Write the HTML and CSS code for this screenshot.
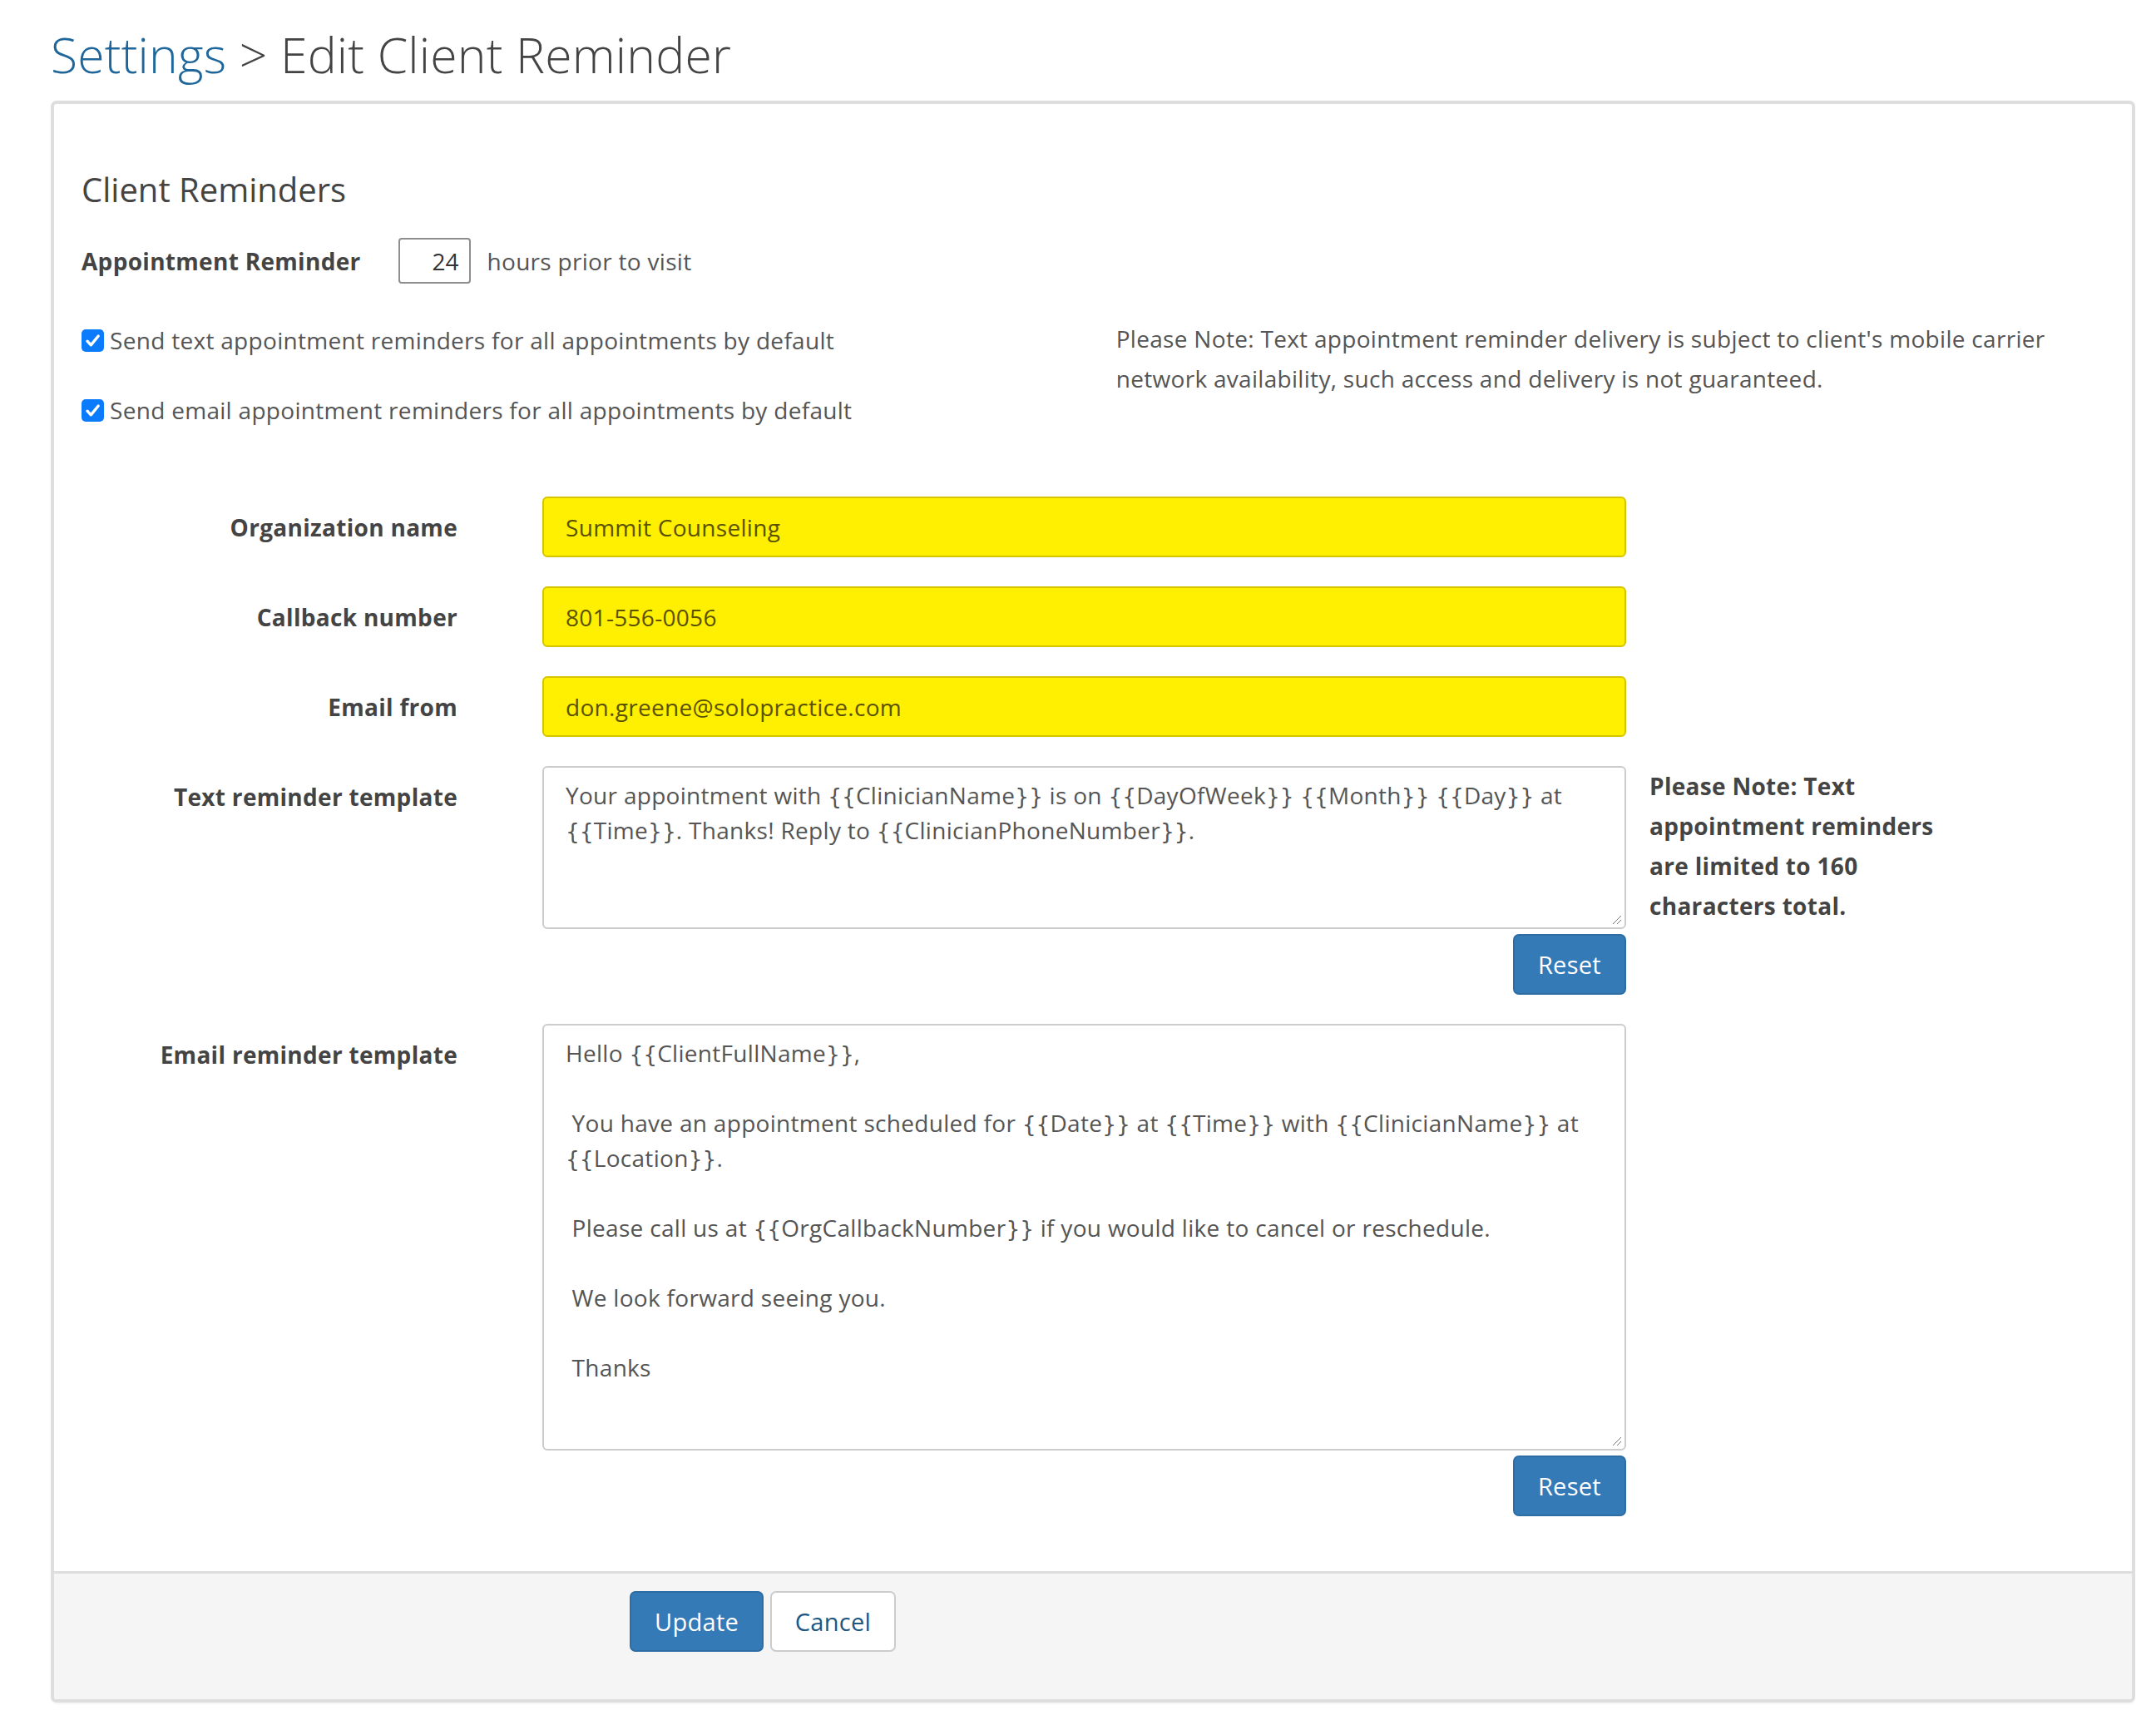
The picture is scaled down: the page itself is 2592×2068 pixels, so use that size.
FILE: index.html
```html
<!DOCTYPE html>
<html>
<head>
    <title>Edit Client Reminder</title>
    <link rel="stylesheet" href="styles.css">
</head>
<body>
    <div class="page">
        <h1 class="page-title"><a href="#" class="crumb">Settings</a> &gt; Edit Client Reminder</h1>

        <div class="panel">
            <div class="panel-body">
                <h3 class="section-title">Client Reminders</h3>

                <div class="lead-row">
                    <span class="lead-label">Appointment Reminder</span>
                    <input type="text" class="hours" value="24">
                    <span>hours prior to visit</span>
                </div>

                <div class="options">
                    <div class="checks">
                        <label class="check">
                            <span class="box"><svg width="27" height="27" viewBox="0 0 27 27"><path d="M7 14.2l4.3 4.6L20.2 8" fill="none" stroke="#fff" stroke-width="3.4" stroke-linecap="round" stroke-linejoin="round"/></svg></span>
                            Send text appointment reminders for all appointments by default
                        </label>
                        <label class="check">
                            <span class="box"><svg width="27" height="27" viewBox="0 0 27 27"><path d="M7 14.2l4.3 4.6L20.2 8" fill="none" stroke="#fff" stroke-width="3.4" stroke-linecap="round" stroke-linejoin="round"/></svg></span>
                            Send email appointment reminders for all appointments by default
                        </label>
                    </div>
                    <p class="carrier-note">Please Note: Text appointment reminder delivery is subject to client's mobile carrier network availability, such access and delivery is not guaranteed.</p>
                </div>

                <form class="fields">
                    <div class="field-row">
                        <label class="field-label" for="org_name">Organization name</label>
                        <div class="field-control">
                            <input type="text" id="org_name" class="text-input autofill" value="Summit Counseling">
                        </div>
                    </div>
                    <div class="field-row">
                        <label class="field-label" for="callback">Callback number</label>
                        <div class="field-control">
                            <input type="text" id="callback" class="text-input autofill" value="801-556-0056">
                        </div>
                    </div>
                    <div class="field-row">
                        <label class="field-label" for="email_from">Email from</label>
                        <div class="field-control">
                            <input type="text" id="email_from" class="text-input autofill" value="don.greene@solopractice.com">
                        </div>
                    </div>
                    <div class="field-row">
                        <label class="field-label" for="text_tpl">Text reminder template</label>
                        <div class="field-control">
                            <div id="text_tpl" class="template template-sms" role="textbox" contenteditable="true">Your appointment with <span class="br">{{</span>ClinicianName<span class="br">}}</span> is on <span class="br">{{</span>DayOfWeek<span class="br">}}</span> <span class="br">{{</span>Month<span class="br">}}</span> <span class="br">{{</span>Day<span class="br">}}</span> at <span class="br">{{</span>Time<span class="br">}}</span>. Thanks! Reply to <span class="br">{{</span>ClinicianPhoneNumber<span class="br">}}</span>.<svg class="grip" width="12" height="12" viewBox="0 0 12 12"><path d="M11 1L1 11M11 6L6 11" stroke="#777" stroke-width="1"/></svg></div>
                            <div class="reset-wrap"><button type="button" class="btn btn-primary">Reset</button></div>
                        </div>
                        <p class="limit-note">Please Note: Text appointment reminders are limited to 160 characters total.</p>
                    </div>
                    <div class="field-row">
                        <label class="field-label" for="email_tpl">Email reminder template</label>
                        <div class="field-control">
                            <div id="email_tpl" class="template template-email" role="textbox" contenteditable="true">Hello <span class="br">{{</span>ClientFullName<span class="br">}}</span>,

 You have an appointment scheduled for <span class="br">{{</span>Date<span class="br">}}</span> at <span class="br">{{</span>Time<span class="br">}}</span> with <span class="br">{{</span>ClinicianName<span class="br">}}</span> at <span class="br">{{</span>Location<span class="br">}}</span>.

 Please call us at <span class="br">{{</span>OrgCallbackNumber<span class="br">}}</span> if you would like to cancel or reschedule.

 We look forward seeing you.

 Thanks<svg class="grip" width="12" height="12" viewBox="0 0 12 12"><path d="M11 1L1 11M11 6L6 11" stroke="#777" stroke-width="1"/></svg></div>
                            <div class="reset-wrap"><button type="button" class="btn btn-primary">Reset</button></div>
                        </div>
                    </div>
                </form>
            </div>
            <div class="panel-footer">
                <button type="button" class="btn btn-primary">Update</button>
                <button type="button" class="btn btn-default">Cancel</button>
            </div>
        </div>
    </div>
</body>
</html>
```

FILE: styles.css
```css
body {
    font-family: "Open Sans", "Liberation Sans", Arial, sans-serif;
    font-size: 28px;
    line-height: 42px;
    letter-spacing: 0.3px;
    color: #555;
    background-color: #fff;
    margin: 0;
}
.page {
    padding: 34px 25px 20px 61px;
}
.page-title {
    font-size: 58.8px;
    font-weight: 300;
    line-height: 62px;
    letter-spacing: 0.2px;
    color: #444;
    margin: 0 0 25px;
}
.crumb {
    color: #1f669b;
    text-decoration: none;
}
.panel {
    border: 4px solid #dedede;
    border-radius: 7px;
    box-shadow: 0 2px 2px rgba(0, 0, 0, 0.04);
    background: #fff;
}
.panel-body {
    padding: 81px 33px 66px 33px;
}
.section-title {
    font-size: 40px;
    font-weight: 400;
    line-height: 44px;
    letter-spacing: 0;
    color: #444;
    margin: 0;
}
.lead-row {
    display: flex;
    align-items: center;
    height: 55px;
    margin-top: 36px;
}
.lead-label {
    font-weight: 700;
    color: #444;
    margin-right: 45px;
}
.hours {
    width: 87px;
    height: 55px;
    box-sizing: border-box;
    border: 2px solid #8e8e8e;
    border-radius: 4px;
    font-family: inherit;
    font-size: 28px;
    color: #333;
    text-align: right;
    padding: 0 12px;
    margin-right: 20px;
}
.options {
    display: flex;
    margin-top: 42px;
}
.checks {
    width: 1256px;
    padding-top: 5px;
}
.check {
    display: flex;
    align-items: center;
    gap: 7px;
    margin-bottom: 42px;
}
.check:last-child {
    margin-bottom: 0;
}
.box {
    display: block;
    width: 27px;
    height: 27px;
    border-radius: 5px;
    background-color: #0b7bfe;
}
.box svg {
    display: block;
}
.carrier-note {
    width: 1200px;
    line-height: 48px;
    margin: 0;
}
.fields {
    margin-top: 83px;
}
.field-row {
    display: flex;
    align-items: flex-start;
    margin-bottom: 35px;
}
.field-row:last-child {
    margin-bottom: 0;
}
.field-label {
    flex: 0 0 452px;
    margin-right: 102px;
    padding-top: 16px;
    text-align: right;
    font-weight: 700;
    color: #444;
}
.field-control {
    flex: 0 0 1303px;
}
.text-input {
    display: block;
    width: 100%;
    height: 73px;
    box-sizing: border-box;
    padding: 0 26px;
    border: 2px solid #ccc;
    border-radius: 6px;
    font-family: inherit;
    font-size: 28px;
    letter-spacing: 0.3px;
    color: #555;
}
.text-input.autofill {
    background-color: #ffef00;
    border-color: #d4c500;
    color: #5a5200;
}
.template {
    position: relative;
    box-sizing: border-box;
    padding: 12px 10px 12px 26px;
    border: 2px solid #ccc;
    border-radius: 6px;
    background: #fff;
    color: #555;
    white-space: pre-wrap;
    overflow: hidden;
    outline: none;
}
.template .br {
    font-family: "DejaVu Sans", "Open Sans", sans-serif;
    font-size: 26.5px;
    line-height: 0;
    letter-spacing: 0;
}
.grip {
    position: absolute;
    right: 3px;
    bottom: 3px;
}
.template-sms {
    height: 196px;
}
.template-email {
    height: 513px;
}
.reset-wrap {
    text-align: right;
    margin-top: 6px;
}
.limit-note {
    width: 370px;
    margin: 0 0 0 28px;
    line-height: 48px;
    font-weight: 700;
    color: #444;
}
.btn {
    display: inline-block;
    height: 73px;
    padding: 0 28px;
    border: 2px solid transparent;
    border-radius: 7px;
    font-family: inherit;
    font-size: 29px;
    letter-spacing: 0.3px;
    cursor: pointer;
    vertical-align: middle;
}
.btn-primary {
    background-color: #337ab7;
    border-color: #2e6da4;
    color: #fff;
}
.btn-default {
    background-color: #fff;
    border-color: #ccc;
    color: #1d5783;
}
.panel-footer {
    background-color: #f5f5f5;
    border-top: 3px solid #dedede;
    border-radius: 0 0 4px 4px;
    padding: 21px 0 57px 692px;
}
```
